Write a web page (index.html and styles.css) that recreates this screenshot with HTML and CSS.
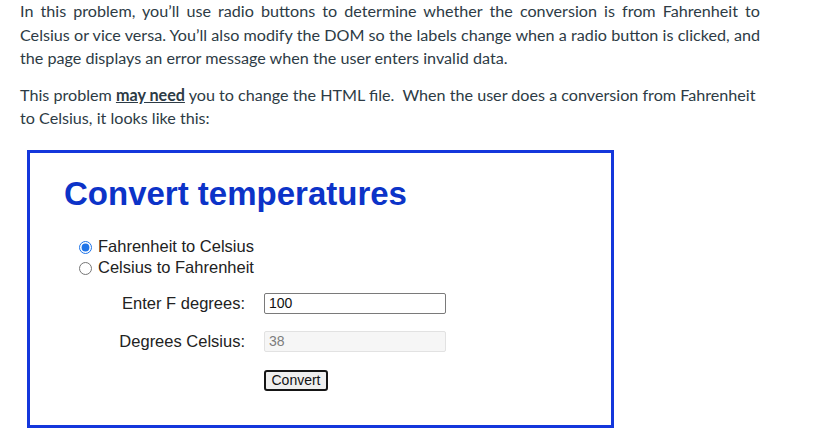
FILE: index.html
```html
<!DOCTYPE html>
<html lang="en">
<head>
    <meta charset="UTF-8">
    <title>Convert temperatures</title>
    <link rel="stylesheet" href="styles.css">
</head>
<body>
    <div class="content">
        <p class="intro">In this problem, you’ll use radio buttons to determine whether the conversion is from Fahrenheit to Celsius or vice versa. You’ll also modify the DOM so the labels change when a radio button is clicked, and the page displays an error message when the user enters invalid data.</p>
        <p>This problem <strong>may need</strong> you to change the HTML file.&nbsp; When the user does a conversion from Fahrenheit to Celsius, it looks like this:</p>

        <div class="shot">      <!-- screenshot of the app -->
            <h1>Convert temperatures</h1>
            <div class="choices">
                <label><input type="radio" name="dir" checked> Fahrenheit to Celsius</label>
                <label><input type="radio" name="dir"> Celsius to Fahrenheit</label>
            </div>
            <div class="form">
                <label for="degrees">Enter F degrees:</label>
                <input type="text" id="degrees" value="100">
                <label for="result">Degrees Celsius:</label>
                <input type="text" id="result" value="38" disabled>
                <button class="convert" type="button">Convert</button>
            </div>
        </div>
    </div>
</body>
</html>
```

FILE: styles.css
```css
body{
    margin: 0;
    background: #fff;
}
.content{
    width: 740px;
    padding: 0 0 0 20px;
    font-family: Lato, "Liberation Sans", sans-serif;
    font-size: 16.15px;
    line-height: 23.5px;
    color: #2d3b45;
}
.content p{
    margin: 0 0 13px 0;
}
.content p.intro{
    margin-top: -1px;
    text-align: justify;
}
.content strong{
    text-decoration: underline;
}
.shot{
    box-sizing: border-box;
    width: 587px;
    height: 278px;
    margin: 20px 0 0 7px;
    border: 3px solid #1437dc;
    padding: 0 34px;
    font-family: "Liberation Sans", Arial, sans-serif;
    color: #222;
}
.shot h1{
    margin: 21px 0 0 0;
    font-size: 33px;
    line-height: 40px;
    color: #0c33c8;
}
.choices{
    margin-top: 23px;
    padding-left: 10px;
}
.choices label{
    display: flex;
    align-items: center;
    height: 21px;
    font-size: 16.5px;
}
.choices input{
    width: 13px;
    height: 13px;
    margin: 0 6px 0 5px;
    accent-color: #1f74e8;
}
.form{
    display: grid;
    grid-template-columns: 181px 182px;
    column-gap: 19px;
    row-gap: 17px;
    align-items: center;
    margin-top: 14px;
}
.form label{
    text-align: right;
    font-size: 16.5px;
    line-height: 21px;
}
.form input{
    box-sizing: border-box;
    width: 182px;
    height: 21px;
    margin: 0;
    padding: 1px 4px;
    border: 1px solid #7a7a7a;
    border-radius: 2px;
    font-family: "Liberation Sans", Arial, sans-serif;
    font-size: 14px;
    color: #111;
    background: #fff;
}
.form input:disabled{
    border-color: #e2e2e2;
    background: #f6f6f6;
    color: #7d7d7d;
}
.form .convert{
    grid-column: 2;
    justify-self: start;
    box-sizing: border-box;
    width: 64px;
    height: 21px;
    margin-top: 1px;
    padding: 0;
    border: 2px solid #151515;
    border-radius: 3px;
    background: #efefef;
    font-family: "Liberation Sans", Arial, sans-serif;
    font-size: 14px;
    color: #111;
}
```
